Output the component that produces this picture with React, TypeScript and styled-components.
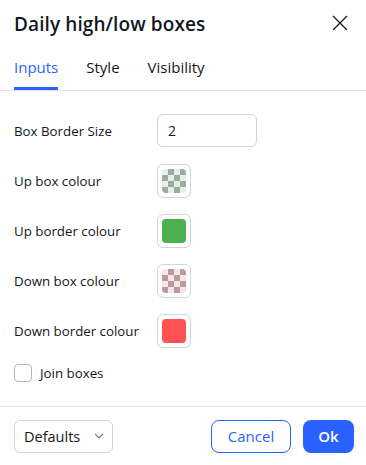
import { FC } from "react";
import styled, { createGlobalStyle } from "styled-components";

const GlobalStyle = createGlobalStyle`
  html, body {
    margin: 0;
    padding: 0;
    background: #ffffff;
  }
  body {
    font-family: "Open Sans", "Noto Sans", sans-serif;
    color: #131722;
  }
  * {
    box-sizing: border-box;
  }
`;

type Swatch = { kind: "solid"; color: string } | { kind: "checker"; light: string; dark: string };

type Row = { label: string; swatch: Swatch };

const colourRows: Row[] = [
  { label: "Up box colour", swatch: { kind: "checker", light: "#e4f0e5", dark: "#9cab9e" } },
  { label: "Up border colour", swatch: { kind: "solid", color: "#4caf50" } },
  { label: "Down box colour", swatch: { kind: "checker", light: "#fce4e6", dark: "#b49ca1" } },
  { label: "Down border colour", swatch: { kind: "solid", color: "#ff5252" } },
];

const tabs = ["Inputs", "Style", "Visibility"];

const CloseIcon: FC = () => (
  <svg width="16" height="16" viewBox="0 0 16 16" fill="none">
    <path d="M1 1L15 15M15 1L1 15" stroke="#131722" strokeWidth="1.3" />
  </svg>
);

const Chevron: FC = () => (
  <svg width="10" height="6" viewBox="0 0 10 6" fill="none">
    <path d="M1 1L5 5L9 1" stroke="#787b86" strokeWidth="1.1" />
  </svg>
);

const App: FC = () => {
  return (
    <>
      <GlobalStyle />
      <Dialog>
        <Header>
          <Title>Daily high/low boxes</Title>
          <CloseButton>
            <CloseIcon />
          </CloseButton>
        </Header>
        <Tabs>
          {tabs.map((tab, i) => (
            <Tab key={tab} $active={i === 0}>
              {tab}
            </Tab>
          ))}
        </Tabs>
        <Content>
          <FieldRow>
            <Label>Box Border Size</Label>
            <NumberInput>2</NumberInput>
          </FieldRow>
          {colourRows.map((row) => (
            <FieldRow key={row.label}>
              <Label>{row.label}</Label>
              <SwatchButton>
                {row.swatch.kind === "solid" ? (
                  <SolidFill $color={row.swatch.color} />
                ) : (
                  <CheckerFill $light={row.swatch.light} $dark={row.swatch.dark} />
                )}
              </SwatchButton>
            </FieldRow>
          ))}
          <CheckRow>
            <Checkbox />
            <CheckLabel>Join boxes</CheckLabel>
          </CheckRow>
        </Content>
        <Footer>
          <SelectButton>
            <span>Defaults</span>
            <Chevron />
          </SelectButton>
          <Actions>
            <CancelButton>Cancel</CancelButton>
            <OkButton>Ok</OkButton>
          </Actions>
        </Footer>
      </Dialog>
    </>
  );
};

export default App;

const Dialog = styled.div`
  width: 366px;
  height: 465px;
  display: flex;
  flex-direction: column;
  background: #ffffff;
`;

const Header = styled.div`
  height: 46px;
  padding: 0 18px 0 14px;
  display: flex;
  align-items: center;
  justify-content: space-between;
`;

const Title = styled.div`
  font-size: 19px;
  font-weight: 600;
  letter-spacing: 0.1px;
  padding-top: 2px;
`;

const CloseButton = styled.div`
  width: 16px;
  height: 16px;
  display: flex;
`;

const Tabs = styled.div`
  height: 45px;
  padding: 0 14px;
  display: flex;
  gap: 28px;
  border-bottom: 1px solid #e0e3eb;
`;

const Tab = styled.div<{ $active: boolean }>`
  height: 100%;
  display: flex;
  align-items: center;
  font-size: 15px;
  padding-top: 1px;
  color: ${({ $active }) => ($active ? "#2962ff" : "#131722")};
  border-bottom: 3px solid ${({ $active }) => ($active ? "#2962ff" : "transparent")};
  margin-bottom: -1px;
`;

const Content = styled.div`
  flex: 1;
  padding: 23px 14px 0;
  display: flex;
  flex-direction: column;
  gap: 17px;
`;

const FieldRow = styled.div`
  display: grid;
  grid-template-columns: 143px auto;
  align-items: center;
  height: 33px;
`;

const Label = styled.div`
  font-size: 13.3px;
`;

const NumberInput = styled.div`
  width: 100px;
  height: 33px;
  border: 1px solid #d1d4dc;
  border-radius: 6px;
  padding: 0 10px;
  display: flex;
  align-items: center;
  font-size: 14px;
`;

const SwatchButton = styled.div`
  width: 34px;
  height: 34px;
  border: 1px solid #d1d4dc;
  border-radius: 6px;
  padding: 4px;
`;

const SolidFill = styled.div<{ $color: string }>`
  width: 24px;
  height: 24px;
  border-radius: 4px;
  background: ${({ $color }) => $color};
`;

const CheckerFill = styled.div<{ $light: string; $dark: string }>`
  width: 24px;
  height: 24px;
  border-radius: 4px;
  background-color: ${({ $light }) => $light};
  background-image: conic-gradient(
    ${({ $dark }) => $dark} 0 25%,
    transparent 0 50%,
    ${({ $dark }) => $dark} 0 75%,
    transparent 0
  );
  background-size: 12px 12px;
`;

const CheckRow = styled.div`
  display: flex;
  align-items: center;
  gap: 8px;
  height: 18px;
`;

const Checkbox = styled.div`
  width: 18px;
  height: 18px;
  border: 1px solid #b2b5be;
  border-radius: 4px;
`;

const CheckLabel = styled.div`
  font-size: 13.3px;
`;

const Footer = styled.div`
  height: 59px;
  border-top: 1px solid #e0e3eb;
  padding: 0 12px 0 14px;
  display: flex;
  align-items: center;
  justify-content: space-between;
`;

const SelectButton = styled.div`
  width: 99px;
  height: 33px;
  border: 1px solid #d1d4dc;
  border-radius: 6px;
  padding: 0 8px 0 9px;
  display: flex;
  align-items: center;
  justify-content: space-between;
  font-size: 14.5px;
`;

const Actions = styled.div`
  display: flex;
  gap: 12px;
`;

const BaseButton = styled.div`
  height: 33px;
  border-radius: 8px;
  display: flex;
  align-items: center;
  justify-content: center;
  font-size: 15px;
  font-weight: 600;
`;

const CancelButton = styled(BaseButton)`
  width: 80px;
  border: 1px solid #2962ff;
  color: #2962ff;
  font-weight: 400;
`;

const OkButton = styled(BaseButton)`
  width: 51px;
  background: #2962ff;
  color: #ffffff;
`;
